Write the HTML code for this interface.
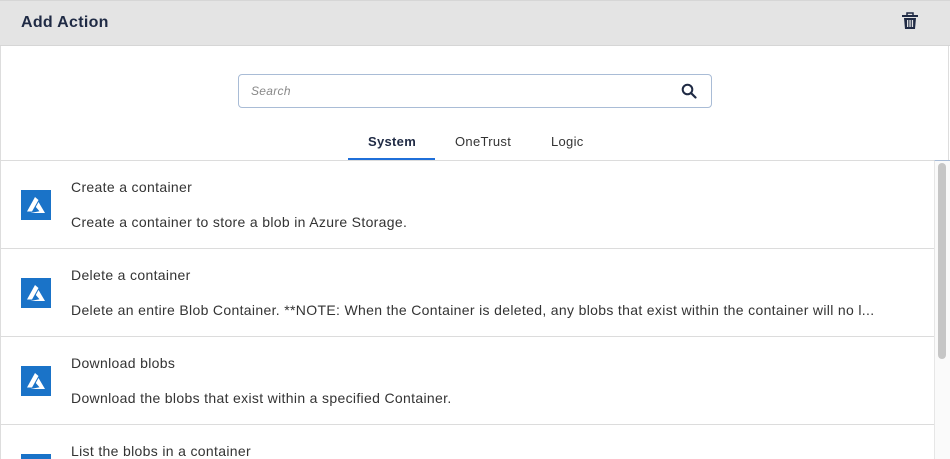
<!DOCTYPE html>
<html><head><style>
*{margin:0;padding:0;box-sizing:border-box}
html,body{width:950px;height:459px;overflow:hidden}
body{background:#fff;font-family:"Liberation Sans",sans-serif;color:#2f3640;position:relative}
.hdr{position:absolute;left:0;top:0;width:950px;height:46px;background:#e4e4e4;border-top:1px solid #d6d6d6;border-bottom:1px solid #d6d6d6}
.hdr h1{position:absolute;left:21px;top:13px;font-size:16px;font-weight:bold;color:#1f2a44;letter-spacing:0.3px}
.frame{position:absolute;left:0;top:46px;width:1px;height:413px;background:#ddd}
.frame2{position:absolute;left:948px;top:46px;width:1px;height:114px;background:#ddd}
.search{position:absolute;left:238px;top:74px;width:474px;height:34px;border:1px solid #a9bcd6;border-radius:4px}
.search span{position:absolute;left:12px;top:9px;font-size:12px;font-style:italic;color:#888;letter-spacing:0.3px}
.tab{position:absolute;top:134px;font-size:13px;color:#333;letter-spacing:0.3px}
.ul{position:absolute;left:348px;top:158px;width:87px;height:2px;background:#1f6fd9}
.sep{position:absolute;left:0;width:934px;height:1px;background:#dcdcdc}
.icon{position:absolute;left:21px;width:30px;height:30px;background:#1a73c8;overflow:hidden}
.t{position:absolute;left:71px;font-size:14px;color:#333;letter-spacing:0.33px;white-space:nowrap}
.sb{position:absolute;left:934px;top:160px;width:16px;height:299px;background:#fafafa;border-left:1px solid #e6e6e6;border-top:1px solid #a9bcd6}
.th{position:absolute;left:938px;top:163px;width:8px;height:196px;background:#c6c6c6;border-radius:4px}
</style></head><body>
<div class="hdr"><h1>Add Action</h1>
<svg style="position:absolute;left:902px;top:11px" width="16" height="18" viewBox="0 0 16 18"><rect x="0" y="3" width="16" height="2" fill="#1f2a44"/><rect x="5" y="1" width="6" height="3" fill="none" stroke="#1f2a44" stroke-width="1.5"/><path d="M2 6h12l-1 11H3z" fill="#1f2a44"/><rect x="5" y="8" width="1.3" height="7" fill="#e4e4e4"/><rect x="7.4" y="8" width="1.3" height="7" fill="#e4e4e4"/><rect x="9.8" y="8" width="1.3" height="7" fill="#e4e4e4"/></svg>
</div>
<div class="frame"></div><div class="frame2"></div>
<div class="search"><span>Search</span>
<svg style="position:absolute;left:442px;top:8px" width="16" height="16" viewBox="0 0 16 16"><circle cx="6.5" cy="6.5" r="4.8" fill="none" stroke="#1f2a44" stroke-width="2"/><path d="M10 10l4.5 4.5" stroke="#1f2a44" stroke-width="2.2" stroke-linecap="round"/></svg></div>
<div class="tab" style="left:368px;font-weight:bold;color:#1f2a44">System</div>
<div class="tab" style="left:455px">OneTrust</div>
<div class="tab" style="left:551px">Logic</div>
<div class="ul"></div>
<div class="sep" style="top:160px"></div>
<div class="sep" style="top:248px"></div>
<div class="sep" style="top:336px"></div>
<div class="sep" style="top:424px"></div>
<div class="icon" style="top:190px"><svg width="30" height="30"><polygon points="14,7 17.5,10 11,21.5 6,21.5" fill="#fff"/><polygon points="17.5,12 24,23 9.5,23 18.5,21.2 14.8,17" fill="#fff"/></svg></div>
<div class="icon" style="top:278px"><svg width="30" height="30"><polygon points="14,7 17.5,10 11,21.5 6,21.5" fill="#fff"/><polygon points="17.5,12 24,23 9.5,23 18.5,21.2 14.8,17" fill="#fff"/></svg></div>
<div class="icon" style="top:366px"><svg width="30" height="30"><polygon points="14,7 17.5,10 11,21.5 6,21.5" fill="#fff"/><polygon points="17.5,12 24,23 9.5,23 18.5,21.2 14.8,17" fill="#fff"/></svg></div>
<div class="icon" style="top:454px;height:5px"></div>
<div class="t" style="top:179px">Create a container</div>
<div class="t" style="top:214px">Create a container to store a blob in Azure Storage.</div>
<div class="t" style="top:267px">Delete a container</div>
<div class="t" style="top:302px">Delete an entire Blob Container. **NOTE: When the Container is deleted, any blobs that exist within the container will no l...</div>
<div class="t" style="top:355px">Download blobs</div>
<div class="t" style="top:390px">Download the blobs that exist within a specified Container.</div>
<div class="t" style="top:443px;height:16px;overflow:hidden">List the blobs in a container</div>
<div class="sb"></div><div class="th"></div>
</body></html>
